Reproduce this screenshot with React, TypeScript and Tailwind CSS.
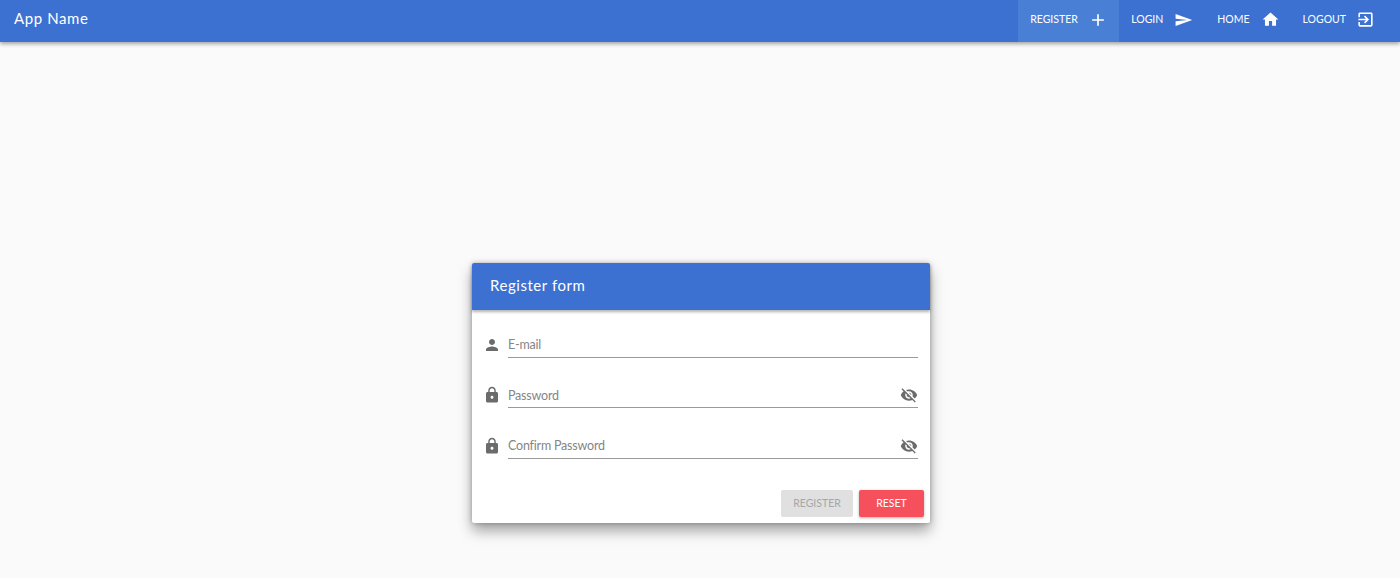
const font = { fontFamily: '"Lato", "Noto Sans", sans-serif' };

const paths = {
  add: 'M19 13h-6v6h-2v-6H5v-2h6V5h2v6h6v2z',
  send: 'M2.01 21L23 12 2.01 3 2 10l15 2-15 2z',
  home: 'M10 20v-6h4v6h5v-8h3L12 3 2 12h3v8z',
  exit: 'M10.09 15.59L11.5 17l5-5-5-5-1.41 1.41L12.67 11H3v2h9.67l-2.58 2.59zM19 3H5c-1.11 0-2 .9-2 2v4h2V5h14v14H5v-4H3v4c0 1.1.89 2 2 2h14c1.1 0 2-.9 2-2V5c0-1.1-.9-2-2-2z',
  person: 'M12 12c2.21 0 4-1.79 4-4s-1.79-4-4-4-4 1.79-4 4 1.79 4 4 4zm0 2c-2.67 0-8 1.34-8 4v2h16v-2c0-2.66-5.33-4-8-4z',
  lock: 'M18 8h-1V6c0-2.76-2.24-5-5-5S7 3.24 7 6v2H6c-1.1 0-2 .9-2 2v10c0 1.1.9 2 2 2h12c1.1 0 2-.9 2-2V10c0-1.1-.9-2-2-2zm-6 9c-1.1 0-2-.9-2-2s.9-2 2-2 2 .9 2 2-.9 2-2 2zm3.1-9H8.9V6c0-1.71 1.39-3.1 3.1-3.1 1.71 0 3.1 1.39 3.1 3.1v2z',
  eyeOff: 'M12 7c2.76 0 5 2.24 5 5 0 .65-.13 1.26-.36 1.83l2.92 2.92c1.51-1.26 2.7-2.89 3.43-4.75-1.73-4.39-6-7.5-11-7.5-1.4 0-2.74.25-3.98.7l2.16 2.16C10.74 7.13 11.35 7 12 7zM2 4.27l2.28 2.28.46.46C3.08 8.3 1.78 10.02 1 12c1.73 4.39 6 7.5 11 7.5 1.55 0 3.03-.3 4.38-.84l.42.42L19.73 22 21 20.73 3.27 3 2 4.27zM7.53 9.8l1.55 1.55c-.05.21-.08.43-.08.65 0 1.66 1.34 3 3 3 .22 0 .44-.03.65-.08l1.55 1.55c-.67.33-1.41.53-2.2.53-2.76 0-5-2.24-5-5 0-.79.2-1.53.53-2.2zm4.31-.78l3.15 3.15.02-.16c0-1.66-1.34-3-3-3l-.17.01z',
};

function Icon({ d, className }: { d: string; className: string }) {
  return (
    <svg className={`shrink-0 ${className}`} viewBox="0 0 24 24" fill="currentColor" preserveAspectRatio="none">
      <path d={d} />
    </svg>
  );
}

function Field({ label, icon, toggle }: { label: string; icon: string; toggle?: boolean }) {
  return (
    <div className="flex h-[30px] items-center">
      <div className="flex w-[36px] justify-center pl-[4px] pt-[4px] text-[#6b6b6b]">
        <Icon d={icon} className="h-[18px] w-[18px]" />
      </div>
      <div className="flex h-full flex-1 items-center justify-between border-b border-[#9a9a9a] pt-[3px]">
        <span className="pt-[4px] text-[12.5px] tracking-[-0.2px] text-[#858585]">{label}</span>
        {toggle && <Icon d={paths.eyeOff} className="mt-[2px] h-[18px] w-[18px] text-[#6b6b6b]" />}
      </div>
    </div>
  );
}

export default function App() {
  return (
    <div style={font} className="flex h-[578px] flex-col overflow-hidden bg-[#fafafa]">
      <header className="flex h-[42px] shrink-0 items-center justify-between bg-[#3c70d1] pl-[14px] pr-[25px] shadow-[0_2px_4px_rgba(0,0,0,0.35)]">
        <span className="pb-[5px] text-[15px] tracking-[0.6px] text-white">App Name</span>
        <nav className="flex h-full items-center text-[10.5px] text-white">
          <div className="flex h-full w-[101px] items-center bg-[#4a7fd6] pb-[3px] pl-[12px]">
            <span>REGISTER</span>
            <Icon d={paths.add} className="ml-[10px] h-[20px] w-[20px]" />
          </div>
          <div className="ml-[12px] flex items-center pb-[3px]">
            <span>LOGIN</span>
            <Icon d={paths.send} className="ml-[10.5px] h-[16px] w-[19px]" />
          </div>
          <div className="ml-[24.5px] flex items-center pb-[3px]">
            <span>HOME</span>
            <Icon d={paths.home} className="ml-[11.5px] h-[19px] w-[19px]" />
          </div>
          <div className="ml-[22.5px] flex items-center pb-[3px]">
            <span>LOGOUT</span>
            <Icon d={paths.exit} className="ml-[10px] h-[19px] w-[19px]" />
          </div>
        </nav>
      </header>

      <main className="flex flex-1 justify-center pl-[2px] pt-[221px]">
        <div className="h-[260px] w-[458px] rounded-[2px] bg-white shadow-[0_8px_14px_rgba(0,0,0,0.35),0_0_5px_rgba(0,0,0,0.25)]">
          <div className="flex h-[47px] items-center rounded-t-[2px] bg-[#3c70d1] pb-[2px] pl-[18px] text-[15px] tracking-[0.55px] text-white shadow-[0_2px_3px_rgba(0,0,0,0.3)]">
            Register form
          </div>
          <div className="flex flex-col gap-[20.5px] pr-[12px] pt-[17.5px]">
            <Field label="E-mail" icon={paths.person} />
            <Field label="Password" icon={paths.lock} toggle />
            <Field label="Confirm Password" icon={paths.lock} toggle />
          </div>
          <div className="mt-[31.5px] flex justify-end gap-[6px] pr-[6px] text-[10.5px]">
            <div className="flex h-[27px] w-[72px] items-center justify-center rounded-[2px] bg-[#e0e0e0] text-[#a6a6a6]">
              REGISTER
            </div>
            <div className="flex h-[27px] w-[65px] items-center justify-center rounded-[2px] bg-[#f6505c] text-white shadow-[0_1px_3px_rgba(0,0,0,0.3)]">
              RESET
            </div>
          </div>
        </div>
      </main>
    </div>
  );
}
